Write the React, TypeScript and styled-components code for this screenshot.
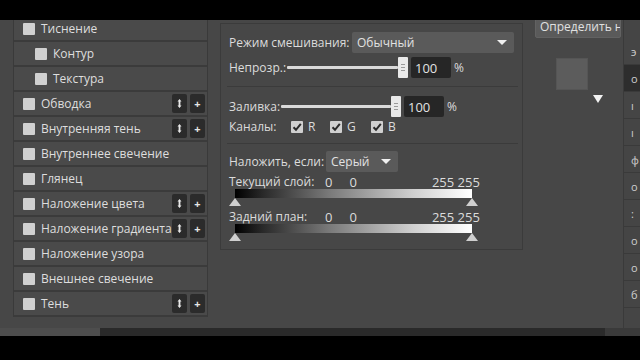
import styled, { createGlobalStyle } from "styled-components";

const GlobalStyle = createGlobalStyle`
  html, body {
    margin: 0;
    padding: 0;
    background: #000;
  }
  body {
    font-family: "Open Sans", "Noto Sans", sans-serif;
  }
`;

const Screen = styled.div`
  width: 640px;
  height: 360px;
  display: flex;
  flex-direction: column;
  background: #000;
  overflow: hidden;
  color: #dcdcdc;
  font-size: 12px;
`;

const TopBar = styled.div`
  height: 20px;
  background: #000;
  position: relative;
  z-index: 2;
`;

const Workspace = styled.div`
  height: 308px;
  display: flex;
  background: #474747;
`;

const LeftPane = styled.div`
  width: 220px;
  padding-left: 13px;
  box-sizing: border-box;
`;

const StyleList = styled.div`
  width: 195px;
  margin-top: -3px;
  border-left: 1px solid #3a3a3a;
  border-right: 1px solid #3a3a3a;
  box-sizing: border-box;
`;

const StyleRow = styled.div<{ $indent?: boolean }>`
  height: 25px;
  box-sizing: border-box;
  border-bottom: 2px solid #3b3b3b;
  background: #4a4a4a;
  display: flex;
  align-items: center;
  padding-left: ${(p) => (p.$indent ? "21px" : "9px")};
  padding-right: 2px;
  white-space: nowrap;
`;

const Box = styled.span`
  width: 12px;
  height: 12px;
  background: #d0d0d0;
  border-radius: 1px;
  flex: none;
  display: inline-flex;
  align-items: center;
  justify-content: center;
`;

const RowLabel = styled.span`
  margin-left: 6px;
  flex: 1;
  min-width: 0;
  line-height: 1;
  color: #dedede;
`;

const SmallBtn = styled.span`
  width: 15px;
  height: 19px;
  margin-left: 3px;
  background: #2b2b2b;
  border-radius: 2px;
  display: flex;
  align-items: center;
  justify-content: center;
  color: #e6e6e6;
  font-size: 11px;
  font-weight: bold;
  flex: none;
  position: relative;
`;

const Middle = styled.div`
  width: 303px;
`;

const OptionsBox = styled.div`
  margin-top: 3px;
  height: 227px;
  box-sizing: border-box;
  border: 1px solid #3b3b3b;
  padding: 8px 8px 0 8px;
`;

const Line = styled.div<{ $h?: number; $top?: number }>`
  height: ${(p) => p.$h ?? 21}px;
  margin-top: ${(p) => p.$top ?? 0}px;
  display: flex;
  align-items: center;
  white-space: nowrap;
`;

const Label = styled.span<{ $w?: number }>`
  line-height: 1;
  ${(p) => (p.$w ? `width: ${p.$w}px; flex: none;` : "")}
`;

const Select = styled.div<{ $w: number }>`
  width: ${(p) => p.$w}px;
  height: 21px;
  box-sizing: border-box;
  background: #5a5a5a;
  border-radius: 2px;
  display: flex;
  align-items: center;
  justify-content: space-between;
  padding: 0 7px 0 5px;
  color: #e2e2e2;
`;

const Caret = styled.span`
  width: 0;
  height: 0;
  border-left: 5px solid transparent;
  border-right: 5px solid transparent;
  border-top: 5px solid #f0f0f0;
`;

const Track = styled.div<{ $w: number }>`
  width: ${(p) => p.$w}px;
  height: 3px;
  background: #dadada;
  border-radius: 1px;
`;

const Thumb = styled.div`
  width: 10px;
  height: 21px;
  box-sizing: border-box;
  background: #e9e9e9;
  border-radius: 1px;
  display: flex;
  flex-direction: column;
  align-items: center;
  justify-content: center;
  gap: 2px;
  & > i {
    width: 4px;
    height: 1px;
    background: #9a9a9a;
  }
`;

const NumInput = styled.div`
  width: 40px;
  height: 21px;
  margin-left: 3px;
  background: #262626;
  border-radius: 2px;
  box-sizing: border-box;
  padding-left: 4px;
  display: flex;
  align-items: center;
  color: #e2e2e2;
  font-size: 13px;
`;

const Percent = styled.span`
  margin-left: 3px;
  line-height: 1;
`;

const Separator = styled.div<{ $top: number }>`
  height: 1px;
  margin: ${(p) => p.$top}px -4px 0 -2px;
  background: #3b3b3b;
`;

const Channel = styled.span<{ $ml: number }>`
  margin-left: ${(p) => p.$ml}px;
  width: 26px;
  display: flex;
  align-items: center;
  gap: 5px;
  line-height: 1;
`;

const Num = styled.span<{ $ml: number }>`
  margin-left: ${(p) => p.$ml}px;
  font-size: 13px;
`;

const GradientBar = styled.div`
  width: 237px;
  height: 9px;
  margin-left: 6px;
  background: linear-gradient(to right, #000 0%, #2a2a2a 12%, #7a7a7a 40%, #cfcfcf 75%, #fff 100%);
`;

const Markers = styled.div`
  width: 249px;
  height: 8px;
  display: flex;
  justify-content: space-between;
`;

const Marker = styled.span`
  width: 0;
  height: 0;
  border-left: 6px solid transparent;
  border-right: 6px solid transparent;
  border-bottom: 8px solid #cfcfcf;
`;

const RightPane = styled.div`
  width: 100px;
  display: flex;
  flex-direction: column;
`;

const NewStyleBtn = styled.div`
  width: 86px;
  height: 24px;
  margin: -6px 0 0 12px;
  background: #5a5a5a;
  border: 1px solid #626262;
  border-radius: 2px;
  box-sizing: border-box;
  padding-left: 4px;
  display: flex;
  align-items: center;
  white-space: nowrap;
  overflow: hidden;
  color: #e0e0e0;
  font-size: 12px;
`;

const Swatch = styled.div`
  width: 32px;
  height: 32px;
  margin: 20px 0 0 33px;
  background: #5c5c5c;
  border: 1px solid #555;
  box-sizing: border-box;
`;

const DownArrow = styled.span`
  margin: 5px 0 0 70px;
  width: 0;
  height: 0;
  border-left: 5px solid transparent;
  border-right: 5px solid transparent;
  border-top: 8px solid #f2f2f2;
`;

const SideStrip = styled.div`
  width: 17px;
  border-left: 1px solid #3a3a3a;
  background: #454545;
  box-sizing: border-box;
  padding-top: 18px;
  overflow: hidden;
`;

const StripItem = styled.div<{ $dark?: boolean }>`
  height: 27px;
  box-sizing: border-box;
  border-bottom: 1px solid #3a3a3a;
  background: ${(p) => (p.$dark ? "#2d2d2d" : "transparent")};
  padding-left: 7px;
  display: flex;
  align-items: center;
  white-space: nowrap;
  font-size: 11px;
  color: #cfcfcf;
`;

const ScrollBar = styled.div`
  height: 8px;
  display: flex;
`;

const ScrollPart = styled.div<{ $w: number; $c: string }>`
  width: ${(p) => p.$w}px;
  background: ${(p) => p.$c};
`;

const SortIcon = () => (
  <svg width="5" height="9" viewBox="0 0 5 9">
    <path d="M2.5 0 L4.5 2.5 L0.5 2.5 Z M2.5 9 L4.5 6.5 L0.5 6.5 Z" fill="#e8e8e8" />
    <rect x="1.6" y="2" width="1.8" height="5" fill="#e8e8e8" />
  </svg>
);

const CheckMark = () => (
  <svg width="10" height="10" viewBox="0 0 10 10">
    <path d="M1.5 5.2 L4 7.8 L8.8 1.8" stroke="#2a2a2a" strokeWidth="2" fill="none" />
  </svg>
);

const styles = [
  { name: "Тиснение" },
  { name: "Контур", indent: true },
  { name: "Текстура", indent: true },
  { name: "Обводка", btns: true },
  { name: "Внутренняя тень", btns: true },
  { name: "Внутреннее свечение" },
  { name: "Глянец" },
  { name: "Наложение цвета", btns: true },
  { name: "Наложение градиента", btns: true },
  { name: "Наложение узора" },
  { name: "Внешнее свечение" },
  { name: "Тень", btns: true },
];

const strip = ["э", "о", "ı", "ı", "ф", "о", ":", "о", "о", "б"];

export default function App() {
  return (
    <>
      <GlobalStyle />
      <Screen>
        <TopBar />
        <Workspace>
          <LeftPane>
            <StyleList>
              {styles.map((s) => (
                <StyleRow key={s.name} $indent={s.indent}>
                  <Box />
                  <RowLabel>{s.name}</RowLabel>
                  {s.btns && (
                    <>
                      <SmallBtn>
                        <SortIcon />
                      </SmallBtn>
                      <SmallBtn>+</SmallBtn>
                    </>
                  )}
                </StyleRow>
              ))}
            </StyleList>
          </LeftPane>

          <Middle>
            <OptionsBox>
              <Line>
                <Label $w={123}>Режим смешивания:</Label>
                <Select $w={162}>
                  <span>Обычный</span>
                  <Caret />
                </Select>
              </Line>
              <Line $top={4}>
                <Label $w={58}>Непрозр.:</Label>
                <Track $w={111} />
                <Thumb>
                  <i />
                  <i />
                  <i />
                </Thumb>
                <NumInput>100</NumInput>
                <Percent>%</Percent>
              </Line>
              <Separator $top={8} />
              <Line $top={9}>
                <Label $w={52}>Заливка:</Label>
                <Track $w={110} />
                <Thumb>
                  <i />
                  <i />
                  <i />
                </Thumb>
                <NumInput>100</NumInput>
                <Percent>%</Percent>
              </Line>
              <Line $h={16} $top={2}>
                <Label $w={62}>Каналы:</Label>
                <Channel $ml={0}>
                  <Box>
                    <CheckMark />
                  </Box>
                  R
                </Channel>
                <Channel $ml={13}>
                  <Box>
                    <CheckMark />
                  </Box>
                  G
                </Channel>
                <Channel $ml={15}>
                  <Box>
                    <CheckMark />
                  </Box>
                  B
                </Channel>
              </Line>
              <Separator $top={8} />
              <Line $top={7}>
                <Label $w={97}>Наложить, если:</Label>
                <Select $w={72}>
                  <span>Серый</span>
                  <Caret />
                </Select>
              </Line>
              <Line $h={14} $top={3}>
                <Label $w={96}>Текущий слой:</Label>
                <Num $ml={0}>0</Num>
                <Num $ml={17}>0</Num>
                <Num $ml={75}>255 255</Num>
              </Line>
              <GradientBar />
              <Markers>
                <Marker />
                <Marker />
              </Markers>
              <Line $h={14} $top={4}>
                <Label $w={96}>Задний план:</Label>
                <Num $ml={0}>0</Num>
                <Num $ml={17}>0</Num>
                <Num $ml={75}>255 255</Num>
              </Line>
              <GradientBar />
              <Markers>
                <Marker />
                <Marker />
              </Markers>
            </OptionsBox>
          </Middle>

          <RightPane>
            <NewStyleBtn>Определить новый стиль</NewStyleBtn>
            <Swatch />
            <DownArrow />
          </RightPane>

          <SideStrip>
            {strip.map((t, i) => (
              <StripItem key={i} $dark={i === 1}>
                {t}
              </StripItem>
            ))}
          </SideStrip>
        </Workspace>
        <ScrollBar>
          <ScrollPart $w={100} $c="#4d4d4d" />
          <ScrollPart $w={505} $c="#2a2a2a" />
          <ScrollPart $w={35} $c="#3a3a3a" />
        </ScrollBar>
      </Screen>
    </>
  );
}
